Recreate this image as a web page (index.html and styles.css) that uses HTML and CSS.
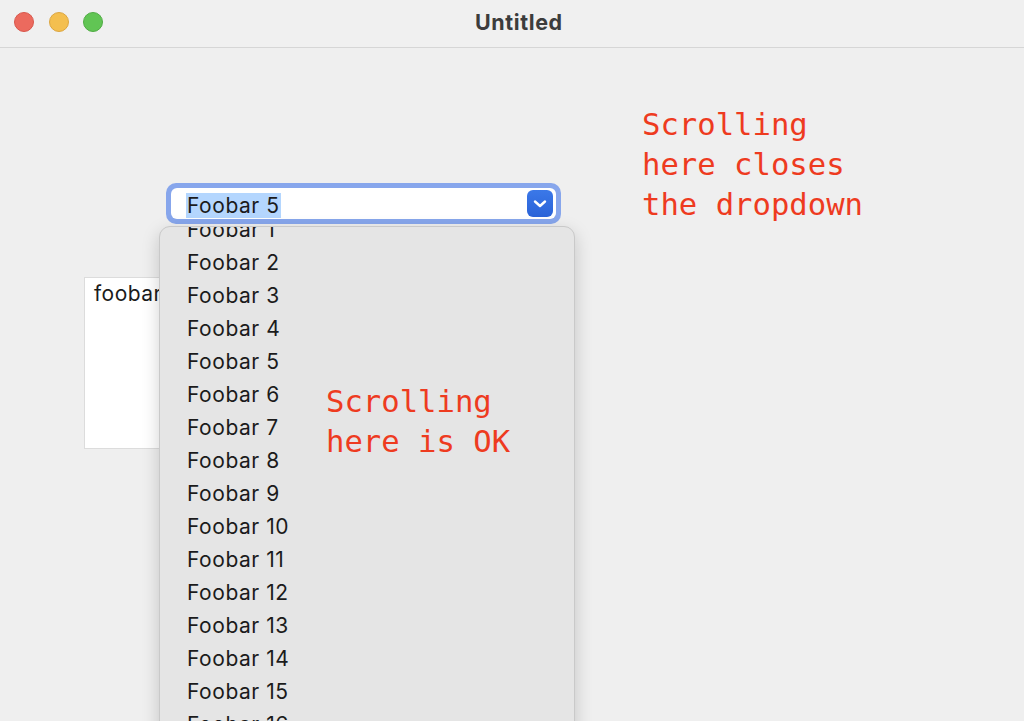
FILE: index.html
```html
<!DOCTYPE html>
<html>
<head>
<meta charset="utf-8">
<link rel="stylesheet" href="styles.css">
</head>
<body>
<div class="window">
  <header class="titlebar">
    <div class="lights">
      <span class="light red"></span>
      <span class="light yellow"></span>
      <span class="light green"></span>
    </div>
    <div class="title">Untitled</div>
  </header>
  <main class="content">
    <div class="combo">
      <div class="field">
        <span class="value"><span class="sel">Foobar 5</span></span>
        <span class="btn">
          <svg width="16" height="10" viewBox="0 0 16 10"><path d="M3 2.5 L8 7 L13 2.5" fill="none" stroke="#fff" stroke-width="2.4" stroke-linecap="round" stroke-linejoin="round"/></svg>
        </span>
      </div>
    </div>
    <div class="listbox">foobar</div>

    <div class="note note-top">Scrolling<br>here closes<br>the dropdown</div>

    <div class="dropdown">
      <ul class="items">
        <li>Foobar 1</li><li>Foobar 2</li><li>Foobar 3</li><li>Foobar 4</li>
        <li>Foobar 5</li><li>Foobar 6</li><li>Foobar 7</li><li>Foobar 8</li>
        <li>Foobar 9</li><li>Foobar 10</li><li>Foobar 11</li><li>Foobar 12</li>
        <li>Foobar 13</li><li>Foobar 14</li><li>Foobar 15</li><li>Foobar 16</li>
      </ul>
      <div class="note note-mid">Scrolling<br>here is OK</div>
    </div>
  </main>
</div>
</body>
</html>
```

FILE: styles.css
```css
* { box-sizing: border-box; }
html, body { margin: 0; padding: 0; }
body {
  width: 1024px;
  height: 721px;
  overflow: hidden;
  background: #efefef;
  font-family: Inter, "Noto Sans", sans-serif;
  color: #1b1b1b;
}
.window {
  height: 721px;
  background: #efefef;
  border-top-left-radius: 10px;
}
.titlebar {
  height: 48px;
  display: flex;
  align-items: center;
  border-bottom: 1px solid #d6d6d6;
  background: #f0f0f0;
  padding-left: 14px;
}
.lights { display: flex; gap: 14.5px; margin-top: -4px; }
.light {
  width: 20px; height: 20px; border-radius: 50%;
  display: block;
}
.red { background: #ec6a5e; border: 1px solid #d8574c; }
.yellow { background: #f4bf4f; border: 1px solid #dca641; }
.green { background: #61c554; border: 1px solid #50ac44; }
.title {
  margin-left: 372px;
  font-weight: 700;
  font-size: 21.5px;
  color: #3c3c3c;
  margin-top: -4px;
  letter-spacing: 0.6px;
}
.content {
  position: relative;
  height: 673px;
  padding-top: 135px;
  padding-left: 166px;
}
.combo {
  width: 395px;
  height: 41px;
  border-radius: 10px;
  background: #87a6ec;
  padding: 5px;
}
.field {
  height: 31px;
  background: #ffffff;
  border-radius: 6px;
  display: flex;
  align-items: center;
  padding-left: 15px;
  padding-right: 3px;
  justify-content: space-between;
}
.value { font-size: 21px; line-height: 28px; letter-spacing: 0.55px; padding-top: 4px; }
.sel { background: #b4d6fe; padding: 0 1px; }
.btn {
  width: 26px; height: 27px;
  border-radius: 6px;
  background: linear-gradient(#3b78e8, #2a63d8);
  display: flex; align-items: center; justify-content: center;
}
.listbox {
  margin-top: 53px;
  margin-left: -82px;
  width: 160px;
  height: 172px;
  background: #fff;
  border: 1px solid #dcdcdc;
  font-size: 21px;
  letter-spacing: 0.45px;
  padding: 4px 0 0 9px;
  line-height: 24px;
}
.note {
  position: absolute;
  font-family: "DejaVu Sans Mono", "Liberation Mono", monospace;
  font-size: 30.6px;
  line-height: 40px;
  color: #ee3b1f;
}
.note-top { left: 642px; top: 57px; }
.dropdown {
  position: absolute;
  left: 159px;
  top: 178px;
  width: 416px;
  height: 520px;
  background: #e5e5e5;
  border: 1px solid #c9c9c9;
  border-radius: 11px;
  box-shadow: 0 6px 18px rgba(0,0,0,0.18);
  overflow: hidden;
}
.items {
  list-style: none;
  margin: -14px 0 0 0;
  padding: 0 0 0 27px;
  font-size: 21px;
  letter-spacing: 0.55px;
  line-height: 33px;
}
.note-mid { left: 166px; top: 155px; }
```
